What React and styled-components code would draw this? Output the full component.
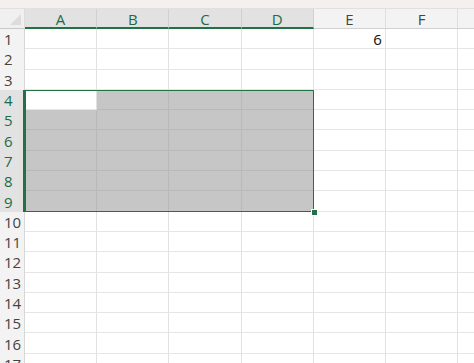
import React from 'react'
import styled, { createGlobalStyle } from 'styled-components'

const ROW_H = 20.3
const COL_W = 72.2
const HEAD_W = 25
const HEAD_H = 20

const cols = ['A', 'B', 'C', 'D', 'E', 'F', 'G']
const rows = Array.from({ length: 17 }, (_, i) => i + 1)

const selCols = ['A', 'B', 'C', 'D']
const isSelRow = (r) => r >= 4 && r <= 9

const Global = createGlobalStyle`
  html, body { margin: 0; padding: 0; background: #fff; overflow: hidden; }
  body { font-family: "Open Sans", "Noto Sans", sans-serif; }
`

const Page = styled.div`
  width: 474px;
  height: 363px;
  overflow: hidden;
  background: #fff;
`

const TopStrip = styled.div`
  height: 8px;
  background: #f4f0f0;
  border-bottom: 1px solid #e4dede;
`

const Sheet = styled.div`
  position: relative;
  display: grid;
  grid-template-columns: ${HEAD_W}px repeat(7, ${COL_W}px);
  grid-template-rows: ${HEAD_H}px repeat(17, ${ROW_H}px);
`

const Corner = styled.div`
  background: #f0f0f0;
  border-right: 1px solid #dcdcdc;
  border-bottom: 1px solid #c8c8c8;
  box-sizing: border-box;
  position: relative;
  overflow: hidden;
  &::after {
    content: '';
    position: absolute;
    right: 3px;
    bottom: 3px;
    border-style: solid;
    border-width: 0 0 11px 11px;
    border-color: transparent transparent #dcdcdc transparent;
  }
`

const ColHead = styled.div`
  box-sizing: border-box;
  display: flex;
  align-items: center;
  justify-content: center;
  font-size: 15px;
  padding-top: 1px;
  color: ${(p) => (p.$sel ? '#1d6b41' : '#444')};
  background: ${(p) => (p.$sel ? '#e2e2e2' : '#f3f3f3')};
  border-right: 1px solid ${(p) => (p.$sel ? '#d0d0d0' : '#dedede')};
  border-bottom: ${(p) => (p.$sel ? '2px solid #217346' : '1px solid #d0d0d0')};
`

const RowHead = styled.div`
  box-sizing: border-box;
  display: flex;
  align-items: center;
  justify-content: flex-start;
  padding-left: 4px;
  font-size: 15px;
  color: ${(p) => (p.$sel ? '#1d6b41' : '#444')};
  background: ${(p) => (p.$sel ? '#e2e2e2' : '#f3f3f3')};
  border-right: ${(p) => (p.$sel ? '2px solid #217346' : '1px solid #d6d6d6')};
`

const Cell = styled.div`
  box-sizing: border-box;
  display: flex;
  align-items: center;
  justify-content: flex-end;
  padding-right: 3px;
  font-size: 15px;
  color: #111;
  background: ${(p) => (p.$fill ? '#c6c6c6' : '#fff')};
  border-right: 1px solid ${(p) => (p.$fill ? '#b9b9b9' : '#e1e1e1')};
  border-bottom: 1px solid ${(p) => (p.$fill ? '#b9b9b9' : '#e6e6e6')};
`

const Selection = styled.div`
  position: absolute;
  left: ${HEAD_W}px;
  top: ${HEAD_H + 3 * ROW_H}px;
  width: ${4 * COL_W}px;
  height: ${6 * ROW_H}px;
  box-sizing: border-box;
  border: 1.5px solid #217346;
  pointer-events: none;
`

const Handle = styled.div`
  position: absolute;
  left: ${HEAD_W + 4 * COL_W - 3}px;
  top: ${HEAD_H + 9 * ROW_H - 3}px;
  width: 5px;
  height: 5px;
  background: #217346;
  border: 1px solid #fff;
`

const cellValue = (r, c) => (r === 1 && c === 'E' ? '6' : '')

export default function App() {
  return (
    <Page>
      <Global />
      <TopStrip />
      <Sheet>
        <Corner />
        {cols.map((c) => (
          <ColHead key={c} $sel={selCols.includes(c)}>
            {c === 'G' ? '' : c}
          </ColHead>
        ))}
        {rows.map((r) => (
          <React.Fragment key={r}>
            <RowHead $sel={isSelRow(r)}>{r}</RowHead>
            {cols.map((c) => {
              const fill = isSelRow(r) && selCols.includes(c) && !(r === 4 && c === 'A')
              return (
                <Cell key={c} $fill={fill}>
                  {cellValue(r, c)}
                </Cell>
              )
            })}
          </React.Fragment>
        ))}
        <Selection />
        <Handle />
      </Sheet>
    </Page>
  )
}
